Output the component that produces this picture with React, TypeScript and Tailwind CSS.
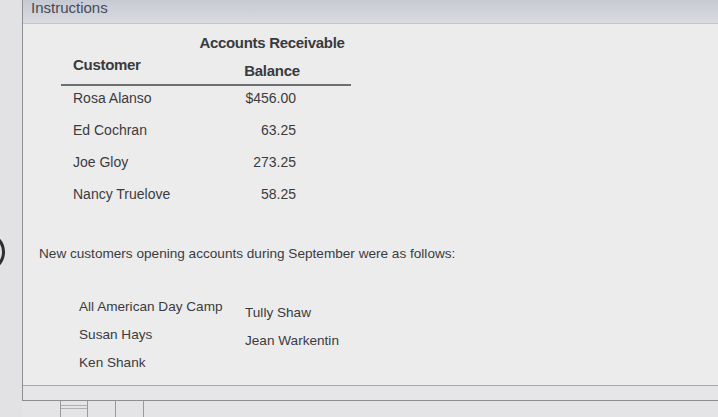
import React from "react";

const balances = [
  { name: "Rosa Alanso", amount: "$456.00" },
  { name: "Ed Cochran", amount: "63.25" },
  { name: "Joe Gloy", amount: "273.25" },
  { name: "Nancy Truelove", amount: "58.25" },
];

const newCustomers = [
  ["All American Day Camp", "Tully Shaw"],
  ["Susan Hays", "Jean Warkentin"],
  ["Ken Shank", ""],
];

export default function App() {
  return (
    <div
      className="w-[718px] h-[417px] overflow-hidden flex bg-[#e4e4e6] text-[#3b3b3d]"
      style={{ fontFamily: '"Liberation Sans", Arial, sans-serif' }}
    >
      {/* left gutter with clipped radio */}
      <div className="w-[22px] shrink-0 flex flex-col bg-[#e2e2e4]">
        <div className="h-[232px]" />
        <div className="w-[40px] h-[40px] -ml-[35px] rounded-full border-[3px] border-[#2e2e30]" />
      </div>

      <div className="flex-1 flex flex-col">
        {/* panel */}
        <div className="flex flex-col h-[401px] border-l border-b border-[#8d8e92] bg-[#ececed]">
          <div className="h-[24px] shrink-0 flex items-start pl-2 bg-gradient-to-b from-[#c7cad2] to-[#d9dbe1] border-b border-[#c4c6cc]">
            <span className="text-[15px] leading-[16px] text-[#454a58]">Instructions</span>
          </div>

          {/* accounts receivable table */}
          <div className="ml-[38px] w-[290px] mt-[10px]">
            <div className="grid grid-cols-[130px_160px] border-b-2 border-[#6e6f73] pb-[5px]">
              <div className="flex items-end pl-3 pb-[3px] text-[15px] font-bold text-[#3a3a3c] tracking-[-0.3px]">
                Customer
              </div>
              <div className="flex flex-col items-center text-[15px] font-bold text-[#3a3a3c] tracking-[-0.3px] gap-[11px] pl-[2px]">
                <span className="leading-[17px]">Accounts Receivable</span>
                <span className="leading-[17px]">Balance</span>
              </div>
            </div>
            <div className="flex flex-col -mt-[4px]">
              {balances.map((row) => (
                <div key={row.name} className="grid grid-cols-[130px_160px] h-[32px] items-center text-[14px]">
                  <span className="pl-3">{row.name}</span>
                  <span className="text-right pr-[55px]">{row.amount}</span>
                </div>
              ))}
            </div>
          </div>

          <p className="ml-[16px] mt-[35px] text-[13.6px] leading-[18px]">
            New customers opening accounts during September were as follows:
          </p>

          <div className="ml-[56px] mt-[30px] grid grid-cols-[166px_auto] text-[13.6px]">
            {newCustomers.map(([a, b]) => (
              <React.Fragment key={a}>
                <span className="h-[28px] leading-[28px]">{a}</span>
                <span className="h-[28px] leading-[28px] pt-[6px]">{b}</span>
              </React.Fragment>
            ))}
          </div>

          <div className="mt-auto h-[15px] border-t border-[#a6a7ab] bg-[#e6e6e8]" />
        </div>

        {/* tabs under panel */}
        <div className="flex-1 flex pl-[38px]">
          <div className="w-[28px] border-l border-r border-[#9a9a9e] flex flex-col pt-[4px]">
            <div className="h-[4px] border-y border-[#b0b0b4]" />
          </div>
          <div className="w-[28px] border-r border-[#9a9a9e]" />
          <div className="w-[28px] border-r border-[#9a9a9e]" />
        </div>
      </div>
    </div>
  );
}
